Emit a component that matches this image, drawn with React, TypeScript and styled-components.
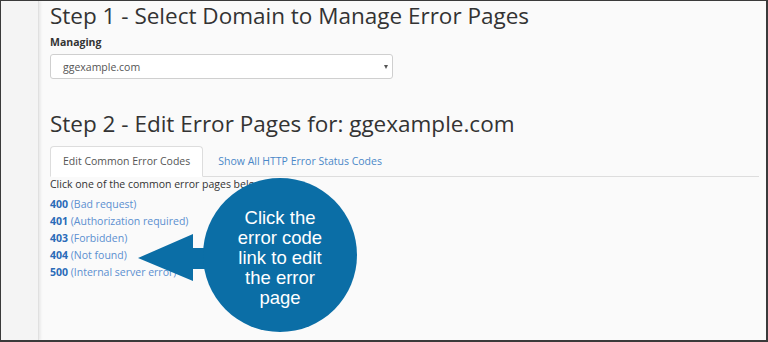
import React from 'react';
import styled, { createGlobalStyle } from 'styled-components';

const GlobalStyle = createGlobalStyle`
  html, body {
    margin: 0;
    padding: 0;
    background: #ffffff;
  }
  * {
    box-sizing: border-box;
  }
`;

const Frame = styled.div`
  position: relative;
  width: 768px;
  height: 342px;
  display: flex;
  overflow: hidden;
  border-style: solid;
  border-color: #3a3a3a;
  border-width: 1px 2px 2px 1px;
  font-family: 'Open Sans', 'Liberation Sans', sans-serif;
  color: #333;
`;

const Sidebar = styled.div`
  position: relative;
  z-index: 1;
  width: 38px;
  flex-shrink: 0;
  background: #f4f4f4;
  border-right: 1px solid #e0e0e0;
  box-shadow: 2px 0 2px rgba(0, 0, 0, 0.06);
`;

const Content = styled.div`
  flex: 1;
  background: #fafafa;
  padding: 0 7px 0 11px;
`;

const Heading = styled.h2<{ $top: number }>`
  margin: ${(p) => p.$top}px 0 0;
  font-size: 22.5px;
  font-weight: 400;
  line-height: 30px;
  color: #333;
  white-space: nowrap;
`;

const Label = styled.div`
  margin-top: 3px;
  font-size: 10.5px;
  font-weight: 700;
  line-height: 16px;
`;

const Select = styled.div`
  margin-top: 4px;
  width: 343px;
  height: 25px;
  display: flex;
  align-items: center;
  justify-content: space-between;
  padding: 0 5px 0 12px;
  background: #fff;
  border: 1px solid #cfcfcf;
  border-radius: 3px;
  font-size: 10.5px;
  color: #555;
`;

const Caret = styled.span`
  width: 0;
  height: 0;
  margin-right: -1px;
  border-left: 2.5px solid transparent;
  border-right: 2.5px solid transparent;
  border-top: 4px solid #555;
`;

const TabBar = styled.div`
  margin-top: 7px;
  display: flex;
  border-bottom: 1px solid #dddddd;
`;

const Tab = styled.div<{ $active?: boolean }>`
  margin-right: 2px;
  margin-bottom: -1px;
  padding: 6px 12px 7px;
  font-size: 10.5px;
  line-height: 16px;
  border: 1px solid ${(p) => (p.$active ? '#dddddd' : 'transparent')};
  border-bottom-color: ${(p) => (p.$active ? '#ffffff' : 'transparent')};
  border-radius: 4px 4px 0 0;
  background: ${(p) => (p.$active ? '#ffffff' : 'transparent')};
  color: ${(p) => (p.$active ? '#555' : '#4a88c8')};
`;

const Intro = styled.div`
  font-size: 10.5px;
  line-height: 12px;
  margin-top: 1px;
`;

const CodeList = styled.ul`
  list-style: none;
  margin: 6px 0 0;
  padding: 0;
`;

const CodeItem = styled.li`
  font-size: 10.5px;
  line-height: 17px;
  color: #5b8fd0;
`;

const Code = styled.b`
  color: #2a6bb8;
  font-weight: 700;
`;

const Callout = styled.div`
  position: absolute;
  left: 136px;
  top: 177px;
  width: 220px;
  height: 156px;
`;

const Arrow = styled.svg`
  position: absolute;
  left: 0;
  top: 0;
`;

const Bubble = styled.div`
  position: absolute;
  left: 66px;
  top: 0;
  width: 154px;
  height: 154px;
  border-radius: 50%;
  background: #0b6ea6;
  display: flex;
  align-items: center;
  justify-content: center;
  padding-top: 6px;
  text-align: center;
  font-family: 'Liberation Sans', Arial, sans-serif;
  font-size: 18.5px;
  line-height: 20px;
  color: #ffffff;
`;

const codes = [
  { code: '400', text: 'Bad request' },
  { code: '401', text: 'Authorization required' },
  { code: '403', text: 'Forbidden' },
  { code: '404', text: 'Not found' },
  { code: '500', text: 'Internal server error' },
];

export default function App() {
  return (
    <>
      <GlobalStyle />
      <Frame>
        <Sidebar />
        <Content>
          <Heading $top={0}>Step 1 - Select Domain to Manage Error Pages</Heading>
          <Label>Managing</Label>
          <Select>
            <span>ggexample.com</span>
            <Caret />
          </Select>
          <Heading $top={30}>Step 2 - Edit Error Pages for: ggexample.com</Heading>
          <TabBar>
            <Tab $active>Edit Common Error Codes</Tab>
            <Tab>Show All HTTP Error Status Codes</Tab>
          </TabBar>
          <Intro>Click one of the common error pages below:</Intro>
          <CodeList>
            {codes.map((c) => (
              <CodeItem key={c.code}>
                <Code>{c.code}</Code> ({c.text})
              </CodeItem>
            ))}
          </CodeList>
        </Content>
        <Callout>
          <Arrow width="220" height="156" viewBox="0 0 220 156">
            <polygon
              points="1,80 56,56 56,70 90,70 90,91 56,91 56,103"
              fill="#0b6ea6"
            />
          </Arrow>
          <Bubble>
            Click the
            <br />
            error code
            <br />
            link to edit
            <br />
            the error
            <br />
            page
          </Bubble>
        </Callout>
      </Frame>
    </>
  );
}
